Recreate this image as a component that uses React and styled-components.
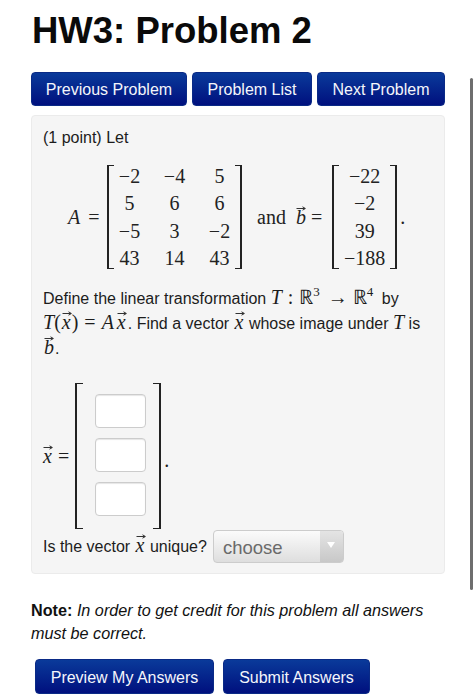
import React from "react";
import styled, { createGlobalStyle } from "styled-components";

const Global = createGlobalStyle`
  html, body { margin: 0; padding: 0; background: #fff; }
  body { font-family: "Liberation Sans", Arial, sans-serif; color: #111; overflow: hidden; }
`;
const Page = styled.div`
  position: relative;
  width: 476px;
  height: 700px;
  overflow: hidden;
  padding: 0 31px;
  box-sizing: border-box;
`;
const Title = styled.h1`
  margin: 0;
  padding: 11px 0 0 1px;
  height: 72px;
  box-sizing: border-box;
  font-size: 36.5px;
  line-height: 40px;
  font-weight: 700;
  color: #0a0a0a;
`;
const ButtonRow = styled.div`
  display: flex;
  gap: ${p => p.$gap}px;
  padding-left: ${p => p.$inset || 0}px;
`;
const NavButton = styled.button`
  width: ${p => p.$w}px;
  height: ${p => p.$h || 34}px;
  padding: 2px 0 0;
  border: 1px solid #0a2a86;
  border-radius: 4px;
  background: linear-gradient(#0a3a9a, #00107e);
  color: #f4f6fb;
  font: 400 16px "Liberation Sans", Arial, sans-serif;
`;
const Panel = styled.section`
  margin-top: 9px;
  width: 414px;
  height: 459px;
  box-sizing: border-box;
  padding: 12px 11px 0;
  background: #f5f5f5;
  border: 1px solid #ebebeb;
  border-radius: 4px;
  font-size: 16px;
  color: #1c1c1c;
`;
const Line = styled.div`
  line-height: 20px;
`;
const MathBlock = styled.div`
  display: flex;
  align-items: center;
  margin: 17px 0 0 25px;
  height: 104px;
  font-family: "Liberation Serif", "Times New Roman", serif;
  font-size: 20px;
  color: #222;
`;
const Sym = styled.span`
  font-family: "Liberation Serif", "Times New Roman", serif;
  font-style: ${p => (p.$upright ? "normal" : "italic")};
  font-size: 20px;
  line-height: 1;
  margin: 0 ${p => p.$mr ?? p.$mx ?? 0}px 0 ${p => p.$mx || 0}px;
`;
const Power = styled.sup`
  font-size: 13px;
  line-height: 0;
  vertical-align: 8px;
`;
const Cell = styled.span`
  line-height: 1;
`;
const Bracketed = styled.div`
  display: grid;
  grid-template-columns: ${p => p.$cols};
  grid-auto-rows: 27.5px;
  align-items: center;
  align-content: center;
  justify-items: center;
  height: 104px;
  width: ${p => p.$w}px;
  box-sizing: border-box;
  position: relative;
  &::before, &::after {
    content: "";
    position: absolute;
    top: 0;
    bottom: 0;
    width: 5px;
    border: solid #222;
    border-width: 1.5px 0;
  }
  &::before { left: 0; border-left-width: 2px; }
  &::after { right: 0; border-right-width: 2px; }
`;
const Para = styled.div`
  margin-top: 17px;
  height: 75px;
  line-height: 25px;
  width: 392px;
  white-space: nowrap;
`;
const Vec = styled.span`
  position: relative;
  display: inline-block;
  font-family: "Liberation Serif", "Times New Roman", serif;
  font-style: italic;
  font-size: 20px;
  line-height: 1;
  padding: 0 1px;
  margin: 0 ${p => p.$mr || 0}px 0 ${p => p.$ml || 0}px;
`;
const VecArrow = styled.svg`
  position: absolute;
  left: 1px;
  top: -1px;
  width: 10px;
  height: 5px;
`;
const V = ({ c, ml, mr }) => (
  <Vec $ml={ml} $mr={mr}>
    <VecArrow viewBox="0 0 10 5">
      <path d="M0.5 2.5H9M6.5 0.8L9.4 2.5L6.5 4.2" stroke="#333" strokeWidth="1" fill="none" />
    </VecArrow>
    {c}
  </Vec>
);
const AnswerBlock = styled.div`
  display: flex;
  align-items: center;
  margin-top: 22px;
  height: 146px;
  margin-left: -1px;
  font-family: "Liberation Serif", "Times New Roman", serif;
  font-size: 20px;
`;
const AnswerCol = styled.div`
  display: flex;
  flex-direction: column;
  align-items: center;
  gap: 10px;
  height: 146px;
  width: 86px;
  margin-left: 1px;
  padding: 11px 0 0 4px;
  box-sizing: border-box;
  position: relative;
  &::before, &::after {
    content: "";
    position: absolute;
    top: 0;
    bottom: 0;
    width: 6px;
    border: solid #222;
    border-width: 1.5px 0;
  }
  &::before { left: 0; border-left-width: 2px; }
  &::after { right: 0; border-right-width: 2px; }
`;
const AnswerInput = styled.input`
  width: 51px;
  height: 34px;
  padding: 0;
  box-sizing: border-box;
  background: #fff;
  border: 1px solid #ccc;
  border-radius: 4px;
  box-shadow: inset 0 1px 1px rgba(0,0,0,0.1);
`;
const Dot = styled.span`
  margin: 8px 0 0 3px;
`;
const Question = styled.div`
  display: flex;
  align-items: center;
  margin-top: 1px;
  height: 33px;
  white-space: pre;
`;
const QuestionText = styled.span`
  margin-top: -3px;
  margin-right: 1px;
`;
const SelectBox = styled.div`
  display: flex;
  width: 131px;
  height: 33px;
  margin-left: 5px;
  box-sizing: border-box;
  border: 1px solid #ccc;
  border-radius: 4px;
  background: linear-gradient(#fbfbfb, #dedede);
  overflow: hidden;
`;
const SelectText = styled.span`
  flex: 1;
  padding-left: 9px;
  font-size: 18.5px;
  line-height: 33px;
  color: #6a6a6a;
`;
const SelectCaret = styled.span`
  width: 23px;
  display: flex;
  justify-content: center;
  padding-top: 11px;
  box-sizing: border-box;
  background: linear-gradient(#e4e4e4, #c8c8c8);
  &::after {
    content: "";
    width: 0;
    height: 0;
    border: 4px solid transparent;
    border-top: 6px solid #fff;
  }
`;
const Note = styled.p`
  margin: 25px 0 14px;
  width: 414px;
  font-size: 16.2px;
  line-height: 23px;
  color: #111;
`;
const ScrollThumb = styled.div`
  position: absolute;
  left: 470px;
  top: 78px;
  width: 3px;
  height: 512px;
  border-radius: 2px;
  background: #6e6e6e;
`;

const A = [["−2","−4","5"],["5","6","6"],["−5","3","−2"],["43","14","43"]];
const B = ["−22","−2","39","−188"];

export default function App() {
  return (
    <Page>
      <Global />
      <Title>HW3: Problem 2</Title>
      <ButtonRow $gap={5}>
        <NavButton $w={156}>Previous Problem</NavButton>
        <NavButton $w={120}>Problem List</NavButton>
        <NavButton $w={128}>Next Problem</NavButton>
      </ButtonRow>
      <Panel>
        <Line>(1 point) Let</Line>
        <MathBlock>
          <Sym>A</Sym><Sym $upright $mx={8} $mr={7.5}>=</Sym>
          <Bracketed $cols="1fr 1fr 1fr" $w={135}>
            {A.flat().map((v, i) => <Cell key={i}>{v}</Cell>)}
          </Bracketed>
          <Sym $upright $mx={15} $mr={9}>and</Sym>
          <V c="b" />
          <Sym $upright $mx={4} $mr={10}>=</Sym>
          <Bracketed $cols="1fr" $w={65}>
            {B.map((v, i) => <Cell key={i}>{v}</Cell>)}
          </Bracketed>
          <Sym $upright $mx={3}>.</Sym>
        </MathBlock>
        <Para>
          Define the linear transformation <Sym>T</Sym><Sym $upright $mx={6}>:</Sym><Sym $upright $mr={4}>ℝ<Power>3</Power></Sym><Sym $upright $mx={4} $mr={5}>→</Sym><Sym $upright $mr={4}>ℝ<Power>4</Power></Sym> by<br />
          <Sym>T</Sym><Sym $upright>(</Sym><V c="x" /><Sym $upright>)</Sym><Sym $upright $mx={6}>=</Sym><Sym $mr={2}>A</Sym><V c="x" mr={1} />. Find a vector <V c="x" ml={0} /> whose image under <Sym>T</Sym> is<br />
          <V c="b" />.
        </Para>
        <AnswerBlock>
          <V c="x" /><Sym $upright $mx={5}>=</Sym>
          <AnswerCol>
            <AnswerInput aria-label="x1" />
            <AnswerInput aria-label="x2" />
            <AnswerInput aria-label="x3" />
          </AnswerCol>
          <Dot>.</Dot>
        </AnswerBlock>
        <Question>
          <QuestionText>Is the vector <V c="x" /> unique?</QuestionText>
          <SelectBox>
            <SelectText>choose</SelectText>
            <SelectCaret />
          </SelectBox>
        </Question>
      </Panel>
      <Note><b>Note:</b> <i>In order to get credit for this problem all answers must be correct.</i></Note>
      <ButtonRow $gap={9} $inset={4}>
        <NavButton $w={179} $h={35}>Preview My Answers</NavButton>
        <NavButton $w={147} $h={35}>Submit Answers</NavButton>
      </ButtonRow>
      <ScrollThumb />
    </Page>
  );
}
